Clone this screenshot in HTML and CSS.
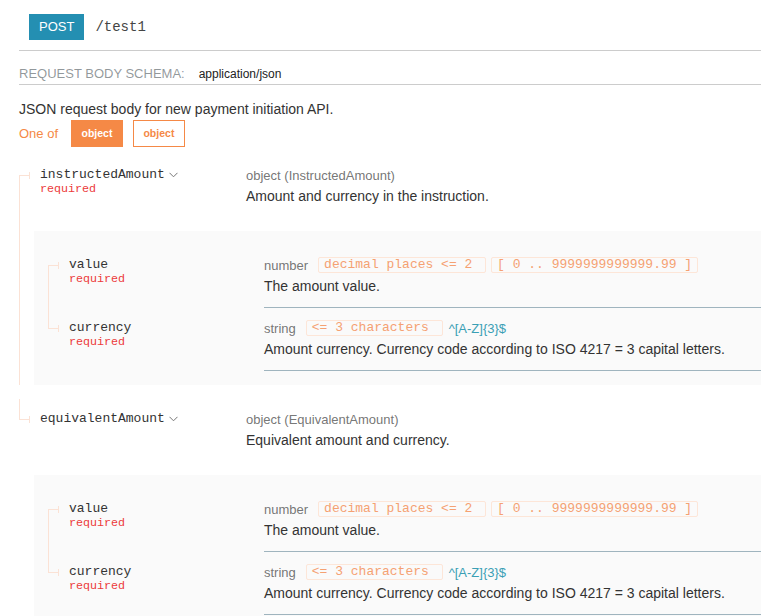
FILE: index.html
```html
<!DOCTYPE html>
<html lang="en">
<head>
<meta charset="utf-8">
<title>POST /test1</title>
<link rel="stylesheet" href="styles.css">
</head>
<body>
<div class="page">
  <div class="op-header">
    <span class="method">POST</span>
    <span class="path">/test1</span>
  </div>
  <h5 class="schema-title">Request Body schema:<span class="media">application/json</span></h5>
  <p class="body-desc">JSON request body for new payment initiation API.</p>
  <div class="one-of">
    <span class="one-of-label">One of</span>
    <span class="one-of-btn active">object</span>
    <span class="one-of-btn">object</span>
  </div>

  <div class="props">
    <div class="prop first">
      <div class="prop-row outer">
        <div class="name-cell">
          <span class="bullet"></span><span class="name">instructedAmount</span><svg class="chev" width="9" height="6" viewBox="0 0 9 6"><polyline points="0.5,0.8 4.5,4.8 8.5,0.8" fill="none" stroke="#777" stroke-width="1"/></svg>
          <div class="required">required</div>
        </div>
        <div class="details expanded">
          <div class="type-line"><span class="type">object (InstructedAmount)</span></div>
          <div class="desc">Amount and currency in the instruction.</div>
        </div>
      </div>
      <div class="nested">
        <div class="prop first">
          <div class="prop-row inner">
            <div class="name-cell">
              <span class="bullet"></span><span class="name">value</span>
              <div class="required">required</div>
            </div>
            <div class="details">
              <div class="type-line"><span class="type">number</span><span class="constraint">decimal places &lt;= 2 </span><span class="constraint">[ 0 .. 9999999999999.99 ]</span></div>
              <div class="desc">The amount value.</div>
            </div>
          </div>
        </div>
        <div class="prop last">
          <div class="prop-row inner">
            <div class="name-cell">
              <span class="bullet"></span><span class="name">currency</span>
              <div class="required">required</div>
            </div>
            <div class="details">
              <div class="type-line"><span class="type">string</span><span class="constraint">&lt;= 3 characters </span><span class="pattern">^[A-Z]{3}$</span></div>
              <div class="desc">Amount currency. Currency code according to ISO 4217 = 3 capital letters.</div>
            </div>
          </div>
        </div>
      </div>
    </div>

    <div class="prop last">
      <div class="prop-row outer">
        <div class="name-cell">
          <span class="bullet"></span><span class="name">equivalentAmount</span><svg class="chev" width="9" height="6" viewBox="0 0 9 6"><polyline points="0.5,0.8 4.5,4.8 8.5,0.8" fill="none" stroke="#777" stroke-width="1"/></svg>
        </div>
        <div class="details expanded">
          <div class="type-line"><span class="type">object (EquivalentAmount)</span></div>
          <div class="desc">Equivalent amount and currency.</div>
        </div>
      </div>
      <div class="nested">
        <div class="prop first">
          <div class="prop-row inner">
            <div class="name-cell">
              <span class="bullet"></span><span class="name">value</span>
              <div class="required">required</div>
            </div>
            <div class="details">
              <div class="type-line"><span class="type">number</span><span class="constraint">decimal places &lt;= 2 </span><span class="constraint">[ 0 .. 9999999999999.99 ]</span></div>
              <div class="desc">The amount value.</div>
            </div>
          </div>
        </div>
        <div class="prop last">
          <div class="prop-row inner">
            <div class="name-cell">
              <span class="bullet"></span><span class="name">currency</span>
              <div class="required">required</div>
            </div>
            <div class="details">
              <div class="type-line"><span class="type">string</span><span class="constraint">&lt;= 3 characters </span><span class="pattern">^[A-Z]{3}$</span></div>
              <div class="desc">Amount currency. Currency code according to ISO 4217 = 3 capital letters.</div>
            </div>
          </div>
        </div>
      </div>
    </div>
  </div>
</div>
</body>
</html>
```
FILE: styles.css
```css
* { box-sizing: border-box; }
html, body { margin: 0; padding: 0; overflow: hidden; }
body {
  font-family: "Liberation Sans", Arial, sans-serif;
  font-size: 14px;
  color: #333;
  background: #fff;
}
.page { padding-left: 19px; }

.op-header {
  display: flex;
  align-items: center;
  gap: 11px;
  padding: 14px 0 10px 10px;
  border-bottom: 1px solid #cccccc;
}
.method {
  background: #248fb2;
  color: #fff;
  font-size: 13px;
  line-height: 26px;
  padding: 0 10px;
}
.path {
  font-family: "Liberation Mono", "Courier New", monospace;
  font-size: 14px;
  color: #444;
}

.schema-title {
  margin: 13px 0 0;
  font-size: 13px;
  line-height: 20px;
  font-weight: normal;
  text-transform: uppercase;
  color: rgba(38, 50, 56, 0.5);
  border-bottom: 1px solid #cccccc;
}
.media {
  text-transform: none;
  color: #222;
  font-size: 12px;
  margin-left: 14px;
}

.body-desc {
  margin: 14px 0 0;
  line-height: 21px;
}

.one-of {
  display: flex;
  align-items: center;
  margin-top: 0;
}
.one-of-label {
  font-size: 13px;
  color: #f58946;
  margin-right: 13px;
}
.one-of-btn {
  font-size: 10.5px;
  font-weight: bold;
  line-height: 25px;
  padding: 0 9.5px;
  border: 1px solid #f58946;
  color: #f58946;
  margin-right: 10px;
}
.one-of-btn.active {
  background: #f58946;
  color: #fff;
}

.props { margin-top: 8px; }

.prop.first {
  background: linear-gradient(#fbe2d5, #fbe2d5) no-repeat 0 20px / 1px calc(100% - 20px);
}
.prop.last {
  background: linear-gradient(#fbe2d5, #fbe2d5) no-repeat 0 0 / 1px 21px;
}

.prop-row { display: grid; }
.prop-row.outer { grid-template-columns: 227px 1fr; }
.prop-row.inner { grid-template-columns: 216px 1fr; }

.name-cell {
  padding: 10px 10px 10px 0;
  line-height: 20px;
  font-family: "Liberation Mono", "Courier New", monospace;
  font-size: 13px;
  color: #333;
  white-space: nowrap;
}
.bullet {
  display: inline-flex;
  align-items: center;
  height: 20px;
  vertical-align: top;
  margin-right: 10px;
}
.bullet::before {
  content: "";
  width: 10px;
  height: 1px;
  background: #fbe2d5;
}
.bullet::after {
  content: "";
  width: 1px;
  height: 7px;
  background: #fbe2d5;
}
.chev {
  margin-left: 4px;
  vertical-align: middle;
}
.required {
  font-size: 11.7px;
  line-height: 1;
  color: #ec3b3b;
  margin-left: 21px;
  margin-top: -1px;
}

.details {
  padding: 10px 0;
  border-bottom: 1px solid #9fb4be;
  white-space: nowrap;
}
.details.expanded { border-bottom: none; }

.type-line {
  display: flex;
  align-items: center;
  height: 20px;
  font-size: 13px;
}
.type {
  color: rgba(102, 102, 102, 0.9);
  margin-right: 5px;
}
.constraint {
  font-family: "Liberation Mono", "Courier New", monospace;
  font-size: 13px;
  line-height: 14px;
  color: #f5a172;
  border: 1px solid #fde6d8;
  border-radius: 2px;
  padding: 0 5px;
  margin-left: 5px;
  white-space: pre;
}
.pattern {
  color: #3a9fb5;
  margin-left: 6px;
}
.desc {
  font-size: 14px;
  line-height: 22px;
}

.nested {
  margin: 14px 0 14px 15px;
  background: #fafafa;
  padding: 14px 0 14px 14px;
}
```
